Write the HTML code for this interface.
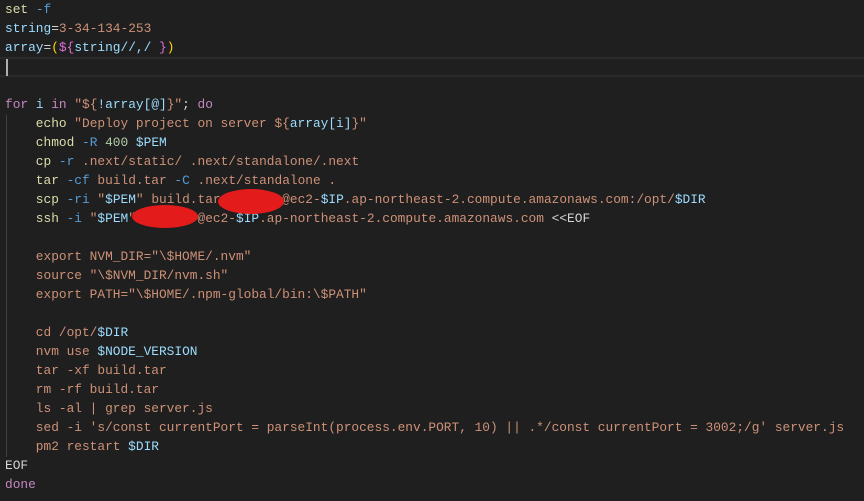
<!DOCTYPE html>
<html><head><meta charset="utf-8"><style>
html,body{margin:0;padding:0;background:#1f1f1f;width:864px;height:501px;overflow:hidden}
.code{position:absolute;left:5px;top:0;font-family:"Liberation Mono",monospace;font-size:12.83px;line-height:19px;color:#d4d4d4;white-space:normal}
.l{height:19px;white-space:pre}
.c{color:#dcdcaa}.f{color:#569cd6}.s{color:#ce9178}.v{color:#9cdcfe}.k{color:#c586c0}.n{color:#b5cea8}.y{color:#ffd700}.p{color:#da70d6}
.cur{position:absolute;left:0;top:57px;width:864px;height:16px;border-top:2px solid #2a2a2a;border-bottom:2px solid #2a2a2a}
.caret{position:absolute;left:6px;top:59px;width:2px;height:17px;background:#aeafad}
.guide{position:absolute;left:6px;top:115px;width:1px;height:342px;background:#404040}
.blob{position:absolute;background:#e31b1b;border-radius:50%}
</style></head><body>
<div class="cur"></div>
<div class="guide"></div>
<div class="code"><div class="l"><span class="c">set</span> <span class="f">-f</span></div><div class="l"><span class="v">string</span>=<span class="s">3-34-134-253</span></div><div class="l"><span class="v">array</span>=<span class="y">(</span><span class="p">${</span><span class="v">string//,/ </span><span class="p">}</span><span class="y">)</span></div><div class="l"> </div><div class="l"> </div><div class="l"><span class="k">for</span> <span class="v">i</span> <span class="k">in</span> <span class="s">"${</span><span class="v">!array[@]</span><span class="s">}"</span>; <span class="k">do</span></div><div class="l">    <span class="c">echo</span> <span class="s">"Deploy project on server ${</span><span class="v">array[i]</span><span class="s">}"</span></div><div class="l">    <span class="c">chmod</span> <span class="f">-R</span> <span class="n">400</span> <span class="v">$PEM</span></div><div class="l">    <span class="c">cp</span> <span class="f">-r</span> <span class="s">.next/static/ .next/standalone/.next</span></div><div class="l">    <span class="c">tar</span> <span class="f">-cf</span> <span class="s">build.tar</span> <span class="f">-C</span> <span class="s">.next/standalone .</span></div><div class="l">    <span class="c">scp</span> <span class="f">-ri</span> <span class="s">"</span><span class="v">$PEM</span><span class="s">" build.tar        @ec2-</span><span class="v">$IP</span><span class="s">.ap-northeast-2.compute.amazonaws.com:/opt/</span><span class="v">$DIR</span></div><div class="l">    <span class="c">ssh</span> <span class="f">-i</span> <span class="s">"</span><span class="v">$PEM</span><span class="s">"        @ec2-</span><span class="v">$IP</span><span class="s">.ap-northeast-2.compute.amazonaws.com</span> &lt;&lt;EOF</div><div class="l"> </div><div class="l"><span class="s">    export NVM_DIR="\$HOME/.nvm"</span></div><div class="l"><span class="s">    source "\$NVM_DIR/nvm.sh"</span></div><div class="l"><span class="s">    export PATH="\$HOME/.npm-global/bin:\$PATH"</span></div><div class="l"> </div><div class="l"><span class="s">    cd /opt/</span><span class="v">$DIR</span></div><div class="l"><span class="s">    nvm use </span><span class="v">$NODE_VERSION</span></div><div class="l"><span class="s">    tar -xf build.tar</span></div><div class="l"><span class="s">    rm -rf build.tar</span></div><div class="l"><span class="s">    ls -al | grep server.js</span></div><div class="l"><span class="s">    sed -i 's/const currentPort = parseInt(process.env.PORT, 10) || .*/const currentPort = 3002;/g' server.js</span></div><div class="l"><span class="s">    pm2 restart </span><span class="v">$DIR</span></div><div class="l">EOF</div><div class="l"><span class="k">done</span></div></div>
<div class="caret"></div>
<div class="blob" style="left:218px;top:189px;width:66px;height:25px"></div>
<div class="blob" style="left:132px;top:205px;width:66px;height:23px"></div>
</body></html>
